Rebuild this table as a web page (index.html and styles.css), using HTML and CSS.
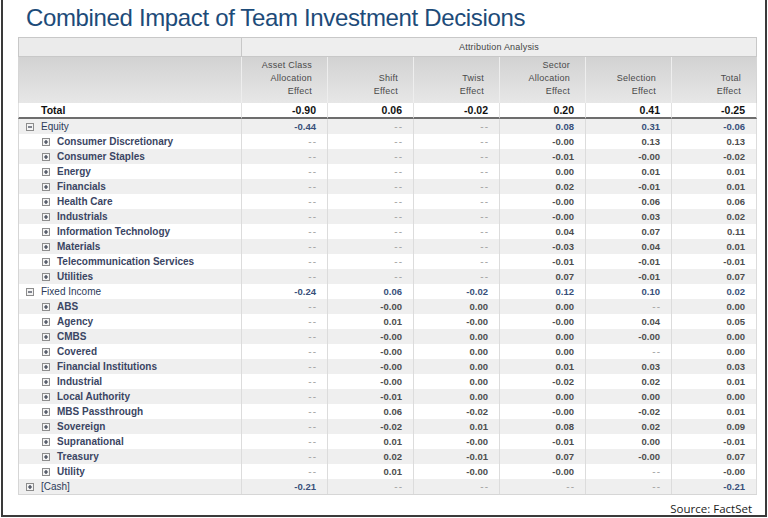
FILE: index.html
```html
<!DOCTYPE html>
<html lang="en">
<head>
<meta charset="utf-8">
<title>Combined Impact of Team Investment Decisions</title>
<link rel="stylesheet" href="styles.css">
</head>
<body>
<div class="frame">
  <h1 class="title">Combined Impact of Team Investment Decisions</h1>
  <table class="attr">
    <colgroup>
      <col class="c-label">
      <col class="c-num"><col class="c-num"><col class="c-num"><col class="c-num"><col class="c-num"><col class="c-num">
    </colgroup>
    <thead>
      <tr class="hr1">
        <th class="blank"></th>
        <th class="group" colspan="6">Attribution Analysis</th>
      </tr>
      <tr class="hr2">
        <th class="blank"></th>
        <th>Asset Class<br>Allocation<br>Effect</th>
        <th>Shift<br>Effect</th>
        <th>Twist<br>Effect</th>
        <th>Sector<br>Allocation<br>Effect</th>
        <th>Selection<br>Effect</th>
        <th>Total<br>Effect</th>
      </tr>
      <tr class="total">
        <td class="lbl">Total</td>
        <td>-0.90</td><td>0.06</td><td>-0.02</td><td>0.20</td><td>0.41</td><td>-0.25</td>
      </tr>
    </thead>
    <tbody>
      <tr class="grp"><td class="lbl"><svg class="tg" viewBox="0 0 8 8"><rect x=".5" y=".5" width="7" height="7"/><path d="M2 4h4"/></svg>Equity</td><td>-0.44</td><td class="na">--</td><td class="na">--</td><td>0.08</td><td>0.31</td><td>-0.06</td></tr>
      <tr class="sub"><td class="lbl"><svg class="tg" viewBox="0 0 8 8"><rect x=".5" y=".5" width="7" height="7"/><path d="M2 4h4M4 2v4"/></svg>Consumer Discretionary</td><td class="na">--</td><td class="na">--</td><td class="na">--</td><td>-0.00</td><td>0.13</td><td>0.13</td></tr>
      <tr class="sub"><td class="lbl"><svg class="tg" viewBox="0 0 8 8"><rect x=".5" y=".5" width="7" height="7"/><path d="M2 4h4M4 2v4"/></svg>Consumer Staples</td><td class="na">--</td><td class="na">--</td><td class="na">--</td><td>-0.01</td><td>-0.00</td><td>-0.02</td></tr>
      <tr class="sub"><td class="lbl"><svg class="tg" viewBox="0 0 8 8"><rect x=".5" y=".5" width="7" height="7"/><path d="M2 4h4M4 2v4"/></svg>Energy</td><td class="na">--</td><td class="na">--</td><td class="na">--</td><td>0.00</td><td>0.01</td><td>0.01</td></tr>
      <tr class="sub"><td class="lbl"><svg class="tg" viewBox="0 0 8 8"><rect x=".5" y=".5" width="7" height="7"/><path d="M2 4h4M4 2v4"/></svg>Financials</td><td class="na">--</td><td class="na">--</td><td class="na">--</td><td>0.02</td><td>-0.01</td><td>0.01</td></tr>
      <tr class="sub"><td class="lbl"><svg class="tg" viewBox="0 0 8 8"><rect x=".5" y=".5" width="7" height="7"/><path d="M2 4h4M4 2v4"/></svg>Health Care</td><td class="na">--</td><td class="na">--</td><td class="na">--</td><td>-0.00</td><td>0.06</td><td>0.06</td></tr>
      <tr class="sub"><td class="lbl"><svg class="tg" viewBox="0 0 8 8"><rect x=".5" y=".5" width="7" height="7"/><path d="M2 4h4M4 2v4"/></svg>Industrials</td><td class="na">--</td><td class="na">--</td><td class="na">--</td><td>-0.00</td><td>0.03</td><td>0.02</td></tr>
      <tr class="sub"><td class="lbl"><svg class="tg" viewBox="0 0 8 8"><rect x=".5" y=".5" width="7" height="7"/><path d="M2 4h4M4 2v4"/></svg>Information Technology</td><td class="na">--</td><td class="na">--</td><td class="na">--</td><td>0.04</td><td>0.07</td><td>0.11</td></tr>
      <tr class="sub"><td class="lbl"><svg class="tg" viewBox="0 0 8 8"><rect x=".5" y=".5" width="7" height="7"/><path d="M2 4h4M4 2v4"/></svg>Materials</td><td class="na">--</td><td class="na">--</td><td class="na">--</td><td>-0.03</td><td>0.04</td><td>0.01</td></tr>
      <tr class="sub"><td class="lbl"><svg class="tg" viewBox="0 0 8 8"><rect x=".5" y=".5" width="7" height="7"/><path d="M2 4h4M4 2v4"/></svg>Telecommunication Services</td><td class="na">--</td><td class="na">--</td><td class="na">--</td><td>-0.01</td><td>-0.01</td><td>-0.01</td></tr>
      <tr class="sub"><td class="lbl"><svg class="tg" viewBox="0 0 8 8"><rect x=".5" y=".5" width="7" height="7"/><path d="M2 4h4M4 2v4"/></svg>Utilities</td><td class="na">--</td><td class="na">--</td><td class="na">--</td><td>0.07</td><td>-0.01</td><td>0.07</td></tr>
      <tr class="grp"><td class="lbl"><svg class="tg" viewBox="0 0 8 8"><rect x=".5" y=".5" width="7" height="7"/><path d="M2 4h4"/></svg>Fixed Income</td><td>-0.24</td><td>0.06</td><td>-0.02</td><td>0.12</td><td>0.10</td><td>0.02</td></tr>
      <tr class="sub"><td class="lbl"><svg class="tg" viewBox="0 0 8 8"><rect x=".5" y=".5" width="7" height="7"/><path d="M2 4h4M4 2v4"/></svg>ABS</td><td class="na">--</td><td>-0.00</td><td>0.00</td><td>0.00</td><td class="na">--</td><td>0.00</td></tr>
      <tr class="sub"><td class="lbl"><svg class="tg" viewBox="0 0 8 8"><rect x=".5" y=".5" width="7" height="7"/><path d="M2 4h4M4 2v4"/></svg>Agency</td><td class="na">--</td><td>0.01</td><td>-0.00</td><td>-0.00</td><td>0.04</td><td>0.05</td></tr>
      <tr class="sub"><td class="lbl"><svg class="tg" viewBox="0 0 8 8"><rect x=".5" y=".5" width="7" height="7"/><path d="M2 4h4M4 2v4"/></svg>CMBS</td><td class="na">--</td><td>-0.00</td><td>0.00</td><td>0.00</td><td>-0.00</td><td>0.00</td></tr>
      <tr class="sub"><td class="lbl"><svg class="tg" viewBox="0 0 8 8"><rect x=".5" y=".5" width="7" height="7"/><path d="M2 4h4M4 2v4"/></svg>Covered</td><td class="na">--</td><td>-0.00</td><td>0.00</td><td>0.00</td><td class="na">--</td><td>0.00</td></tr>
      <tr class="sub"><td class="lbl"><svg class="tg" viewBox="0 0 8 8"><rect x=".5" y=".5" width="7" height="7"/><path d="M2 4h4M4 2v4"/></svg>Financial Institutions</td><td class="na">--</td><td>-0.00</td><td>0.00</td><td>0.01</td><td>0.03</td><td>0.03</td></tr>
      <tr class="sub"><td class="lbl"><svg class="tg" viewBox="0 0 8 8"><rect x=".5" y=".5" width="7" height="7"/><path d="M2 4h4M4 2v4"/></svg>Industrial</td><td class="na">--</td><td>-0.00</td><td>0.00</td><td>-0.02</td><td>0.02</td><td>0.01</td></tr>
      <tr class="sub"><td class="lbl"><svg class="tg" viewBox="0 0 8 8"><rect x=".5" y=".5" width="7" height="7"/><path d="M2 4h4M4 2v4"/></svg>Local Authority</td><td class="na">--</td><td>-0.01</td><td>0.00</td><td>0.00</td><td>0.00</td><td>0.00</td></tr>
      <tr class="sub"><td class="lbl"><svg class="tg" viewBox="0 0 8 8"><rect x=".5" y=".5" width="7" height="7"/><path d="M2 4h4M4 2v4"/></svg>MBS Passthrough</td><td class="na">--</td><td>0.06</td><td>-0.02</td><td>-0.00</td><td>-0.02</td><td>0.01</td></tr>
      <tr class="sub"><td class="lbl"><svg class="tg" viewBox="0 0 8 8"><rect x=".5" y=".5" width="7" height="7"/><path d="M2 4h4M4 2v4"/></svg>Sovereign</td><td class="na">--</td><td>-0.02</td><td>0.01</td><td>0.08</td><td>0.02</td><td>0.09</td></tr>
      <tr class="sub"><td class="lbl"><svg class="tg" viewBox="0 0 8 8"><rect x=".5" y=".5" width="7" height="7"/><path d="M2 4h4M4 2v4"/></svg>Supranational</td><td class="na">--</td><td>0.01</td><td>-0.00</td><td>-0.01</td><td>0.00</td><td>-0.01</td></tr>
      <tr class="sub"><td class="lbl"><svg class="tg" viewBox="0 0 8 8"><rect x=".5" y=".5" width="7" height="7"/><path d="M2 4h4M4 2v4"/></svg>Treasury</td><td class="na">--</td><td>0.02</td><td>-0.01</td><td>0.07</td><td>-0.00</td><td>0.07</td></tr>
      <tr class="sub"><td class="lbl"><svg class="tg" viewBox="0 0 8 8"><rect x=".5" y=".5" width="7" height="7"/><path d="M2 4h4M4 2v4"/></svg>Utility</td><td class="na">--</td><td>0.01</td><td>-0.00</td><td>-0.00</td><td class="na">--</td><td>-0.00</td></tr>
      <tr class="grp"><td class="lbl"><svg class="tg" viewBox="0 0 8 8"><rect x=".5" y=".5" width="7" height="7"/><path d="M2 4h4M4 2v4"/></svg>[Cash]</td><td>-0.21</td><td class="na">--</td><td class="na">--</td><td class="na">--</td><td class="na">--</td><td>-0.21</td></tr>
    </tbody>
  </table>
  <p class="source">Source: FactSet</p>
</div>
</body>
</html>
```

FILE: styles.css
```css
html, body {
  margin: 0;
  padding: 0;
  background: #ffffff;
}

body {
  font-family: "Liberation Sans", Arial, sans-serif;
}

.frame {
  box-sizing: border-box;
  width: 766px;
  height: 517px;
  margin-left: 1px;
  border: 2px solid #3a3a3a;
  border-top: none;
}

.title {
  margin: 0;
  padding: 3px 0 0 23px;
  font-size: 24px;
  line-height: 30px;
  font-weight: normal;
  color: #1d4b79;
  letter-spacing: -0.35px;
}

.attr {
  margin: 4px 0 0 15px;
  width: 739px;
  table-layout: fixed;
  border-collapse: separate;
  border-spacing: 0;
  border-bottom: 1px solid #d6d6d6;
}

.c-label { width: 223px; }
.c-num { width: 86px; }

.attr th,
.attr td {
  padding: 0;
  white-space: nowrap;
}

/* header row 1 */
.hr1 th {
  line-height: 18px;
  font-size: 9px;
  font-weight: normal;
  color: #444444;
  background: #ebebeb;
  border-top: 1px solid #c8c8c8;
  border-bottom: 1px solid #c8c8c8;
  letter-spacing: 0.2px;
}
.hr1 .blank {
  border-left: 1px solid #c8c8c8;
}
.hr1 .group {
  border-left: 1px solid #c8c8c8;
  border-right: 1px solid #c8c8c8;
  text-align: center;
  background: #eeeeee;
}

/* header row 2 */
.hr2 th {
  font-size: 9px;
  font-weight: normal;
  line-height: 13px;
  color: #4a4a4a;
  text-align: right;
  vertical-align: bottom;
  padding: 2px 15px 5px 0;
  background: linear-gradient(to bottom, #d2d2d2, #e7e7e7);
  border-left: 1px solid #eeeeee;
  letter-spacing: 0.25px;
}
.hr2 th.blank {
  border-left: 1px solid #d6d6d6;
}
.hr2 th:last-child {
  border-right: 1px solid #d6d6d6;
}

/* total row */
.total td {
  line-height: 14px;
  font-size: 10.5px;
  font-weight: bold;
  color: #111111;
  text-align: right;
  padding-right: 11px;
  background: #ffffff;
  border-bottom: 2px solid #6d6d6d;
  border-left: 1px solid #e2e2e2;
}
.total td.lbl {
  text-align: left;
  padding: 0 0 0 22px;
}
.total td:last-child {
  border-right: 1px solid #e2e2e2;
}

/* body rows */
.attr tbody td {
  line-height: 15px;
  font-size: 9.5px;
  font-weight: bold;
  color: #4d4d4d;
  text-align: right;
  padding-right: 11px;
  border-left: 1px solid #dcdcdc;
}
.attr tbody td:last-child {
  border-right: 1px solid #dcdcdc;
}
.attr tbody tr:nth-child(odd) td {
  background: #efefef;
}
.attr tbody tr:nth-child(even) td {
  background: #ffffff;
}

.attr tbody td.na {
  color: #a5a5a5;
  font-weight: normal;
  font-size: 10px;
  letter-spacing: 1px;
  padding-right: 10px;
}

.attr tbody td.lbl {
  text-align: left;
  padding-right: 0;
  border-left: 1px solid #d6d6d6;
}

.attr .grp td {
  color: #38507a;
}
.attr .grp td.na {
  color: #a5a5a5;
}
.attr .grp td.lbl {
  padding-left: 7px;
  font-size: 10px;
  font-weight: normal;
  color: #2c3b5a;
}
.attr .sub td.lbl {
  padding-left: 23px;
  font-size: 10px;
  font-weight: bold;
  color: #3a4563;
}

.tg {
  width: 8px;
  height: 8px;
  margin-right: 7px;
  vertical-align: -1px;
}
.tg rect {
  fill: #f3f3f3;
  stroke: #8c8c8c;
  stroke-width: 1;
}
.tg path {
  stroke: #333a4a;
  stroke-width: 1.2;
  fill: none;
}

.source {
  margin: 7px 13px 0 0;
  text-align: right;
  font-family: "Open Sans", "Liberation Sans", sans-serif;
  font-size: 11.5px;
  line-height: 14px;
  color: #1a1a1a;
}
```
